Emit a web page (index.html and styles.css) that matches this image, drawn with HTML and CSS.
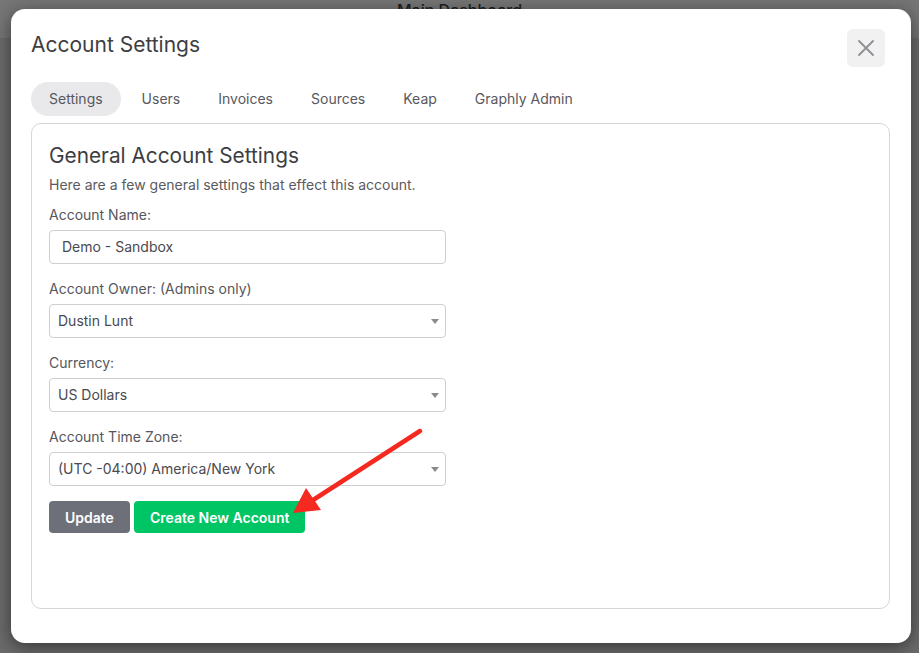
FILE: index.html
```html
<!DOCTYPE html>
<html>
<head>
<meta charset="utf-8">
<link rel="stylesheet" href="styles.css">
</head>
<body>
<div class="page">
  <div class="topbar"><span class="topbar-title">Main Dashboard</span></div>
</div>
<div class="modal">
  <div class="modal-header">
    <h1 class="modal-title">Account Settings</h1>
    <button class="close-btn" aria-label="Close">
      <svg width="18" height="18" viewBox="0 0 18 18"><path d="M2 2L16 16M16 2L2 16" stroke="#8e8e94" stroke-width="1.8" stroke-linecap="round"/></svg>
    </button>
  </div>
  <nav class="tabs">
    <span class="tab active">Settings</span>
    <span class="tab">Users</span>
    <span class="tab">Invoices</span>
    <span class="tab">Sources</span>
    <span class="tab">Keap</span>
    <span class="tab">Graphly Admin</span>
  </nav>
  <section class="card">
    <h2 class="card-title">General Account Settings</h2>
    <p class="card-desc">Here are a few general settings that effect this account.</p>
    <div class="field">
      <label class="label">Account Name:</label>
      <div class="input">Demo - Sandbox</div>
    </div>
    <div class="field">
      <label class="label">Account Owner: (Admins only)</label>
      <div class="select">Dustin Lunt<span class="caret"></span></div>
    </div>
    <div class="field">
      <label class="label">Currency:</label>
      <div class="select">US Dollars<span class="caret"></span></div>
    </div>
    <div class="field">
      <label class="label">Account Time Zone:</label>
      <div class="select">(UTC -04:00) America/New York<span class="caret"></span></div>
    </div>
    <div class="actions">
      <button class="btn btn-gray">Update</button>
      <button class="btn btn-green">Create New Account</button>
    </div>
  </section>
</div>
<svg class="arrow" width="919" height="653" viewBox="0 0 919 653">
  <line x1="420" y1="431" x2="310" y2="502" stroke="#f5291f" stroke-width="4.5" stroke-linecap="round"/>
  <polygon points="293,513 306,488 321,510" fill="#f5291f"/>
</svg>
</body>
</html>
```
FILE: styles.css
```css
* { box-sizing: border-box; }
html, body { margin: 0; padding: 0; }
body {
  width: 919px;
  height: 653px;
  overflow: hidden;
  background: #6b6b6b;
  font-family: Inter, "Noto Sans", sans-serif;
  position: relative;
}
.page { height: 653px; }
.topbar {
  height: 38px;
  background: #767676;
  text-align: center;
  position: relative;
}
.topbar-title {
  display: inline-block;
  font-size: 16px;
  font-weight: 500;
  color: #1e1e1e;
  line-height: 20px;
  margin-top: -5px;
}
.modal {
  position: absolute;
  left: 11px;
  top: 9px;
  width: 900px;
  height: 634px;
  background: #fff;
  border-radius: 14px;
  box-shadow: 0 4px 18px rgba(0,0,0,0.5);
  padding: 20px 21px 0 20px;
}
.modal-header {
  display: flex;
  justify-content: space-between;
  align-items: flex-start;
  height: 38px;
}
.modal-title {
  margin: 3px 0 0 0;
  font-size: 21px;
  font-weight: 400;
  line-height: 26px;
  color: #3d3d42;
}
.close-btn {
  width: 38px;
  height: 38px;
  margin-right: 5px;
  border: none;
  border-radius: 6px;
  background: #f1f1f2;
  display: flex;
  align-items: center;
  justify-content: center;
  padding: 0;
}
.tabs {
  display: flex;
  margin-top: 15px;
  height: 34px;
  align-items: center;
}
.tab {
  height: 34px;
  line-height: 34px;
  padding: 0 17px;
  margin-right: 4px;
  font-size: 14px;
  color: #58585e;
  border-radius: 17px;
}
.tab:first-child { margin-left: 0; padding: 0 18px; }
.tab.active { background: #e9e9eb; }
.card {
  margin-top: 7px;
  border: 1px solid #d6d6d8;
  border-radius: 10px;
  height: 486px;
  padding: 18px 17px;
}
.card-title {
  margin: 0;
  font-size: 20.8px;
  font-weight: 400;
  line-height: 28px;
  color: #3d3d42;
}
.card-desc {
  margin: 5px 0 0 0;
  font-size: 14px;
  line-height: 20px;
  color: #5a5a60;
}
.field { margin-top: 10px; }
.field + .field { margin-top: 15px; }
.label {
  display: block;
  font-size: 14px;
  line-height: 20px;
  color: #56565c;
  margin-bottom: 5px;
}
.input, .select {
  width: 397px;
  height: 34px;
  border: 1px solid #cfcfd2;
  border-radius: 4px;
  font-size: 14px;
  line-height: 32px;
  color: #4a4a50;
  position: relative;
}
.input { padding-left: 12px; }
.select { padding-left: 8px; }
.caret {
  position: absolute;
  right: 6px;
  top: 14px;
  width: 0;
  height: 0;
  border-left: 4px solid transparent;
  border-right: 4px solid transparent;
  border-top: 5px solid #8a8a8a;
}
.actions {
  display: flex;
  gap: 4px;
  margin-top: 15px;
}
.btn {
  height: 32px;
  border: none;
  border-radius: 4px;
  font-family: Inter, "Noto Sans", sans-serif;
  font-size: 14px;
  font-weight: 600;
  color: #fff;
  padding: 0 16px;
}
.btn-gray { background: #6e7079; }
.btn-green { background: #00c565; }
.arrow {
  position: absolute;
  left: 0;
  top: 0;
  pointer-events: none;
}
```
